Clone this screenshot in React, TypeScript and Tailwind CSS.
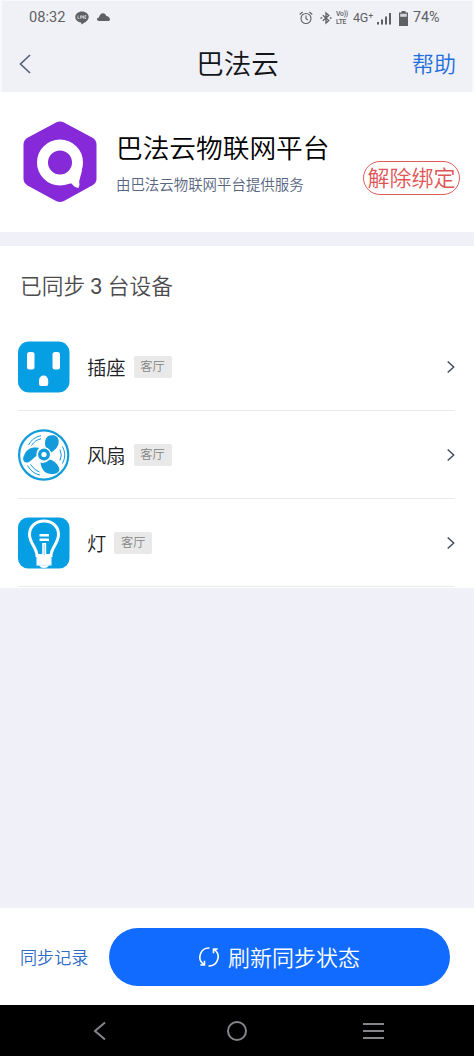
import type { ReactNode } from "react";

function StatusBar() {
  return (
    <div className="flex h-[34px] items-center pl-[27px] pr-[31px] font-['Roboto',sans-serif] text-[14.6px] font-normal text-[#5f6064]">
      <span className="w-[37px] whitespace-nowrap">08:32</span>
      <svg className="ml-[9px] h-[14px] w-[14px]" viewBox="0 0 14 14">
        <path d="M7 .5C3.300.5.3 2.900.3 6c0 2.700 2.200 4.900 5.500 5.400l.5.300v1.800c2.500-1.200 7.400-3.700 7.400-7.500C13.700 2.900 10.700.5 7 .5z" fill="#5f6064" />
        <path d="M2.900 4.500v3h1.500M5.500 4.500v3M6.800 7.500v-3l1.700 3v-3M11.300 4.500H9.900v3h1.400M9.900 6h1.300" fill="none" stroke="#e0e2e8" strokeWidth=".75" />
      </svg>
      <svg className="ml-[8px] mt-[-2px] h-[8px] w-[13px]" viewBox="0 0 13 8" fill="#5f6064">
        <path d="M2 8C.8 8 0 7.300 0 6.300c0-1 .8-1.700 1.900-1.800C2.500 2.200 4 .3 6 .3c1.600 0 2.700 1 3.300 2.700C11 3.200 13 4.600 13 6.500 13 7.400 12.200 8 11.300 8z" />
      </svg>
      <div className="flex-1" />
      <svg className="h-[14px] w-[14px]" viewBox="0 0 14 14" fill="none" stroke="#5f6064" strokeWidth="1.100">
        <circle cx="7" cy="7.500" r="5" />
        <path d="M.7 3.500 3.600 1M10.400 1l2.900 2.500M7 4.500v3.300l2 1.200" />
      </svg>
      <svg className="ml-[7px] h-[14px] w-[12px]" viewBox="0 0 12 14" fill="none" stroke="#5f6064" strokeWidth="1.300">
        <path d="m2.800 4.200 6 5.300L6 12V2l2.800 2.500-6 5.300" />
        <path d="M.5 7h1.700M9.800 7h1.700" strokeWidth="1.700" />
      </svg>
      <div className="ml-[4px] flex w-[13px] flex-col whitespace-nowrap text-[6.8px] font-medium leading-[8px] tracking-[-0.2px]">
        <span>Vo))</span>
        <span>LTE</span>
      </div>
      <span className="ml-[4px] w-[21px] whitespace-nowrap text-[12.5px] tracking-[-0.2px]">4G⁺</span>
      <svg className="ml-[3px] h-[13px] w-[14px]" viewBox="0 0 14 13" fill="#5f6064">
        <path d="M0 10h2v2.500H0zM4 7.500h2v5H4zM8 4.500h2v8H8zM12 1h2v11.500h-2z" />
      </svg>
      <svg className="ml-[8px] h-[15px] w-[9px]" viewBox="0 0 9 15">
        <path d="M2.500 0h4v1.500H9V15H0V1.500h2.500z" fill="#5f6064" />
        <path d="M1.200 2.800h6.600v3H1.200z" fill="#d4d6dc" />
      </svg>
      <span className="ml-[5px] w-[28px] whitespace-nowrap text-[14.3px]">74%</span>
    </div>
  );
}

function BrandLogo() {
  return (
    <svg className="ml-[23px] h-[82px] w-[74px] shrink-0" viewBox="0 0 74 82">
      <path d="M33.500 1.200q3.500-1.600 7 0l29 15.600q4 2.400 4 7v34q0 4-4 6.500l-29 16q-3.500 1.600-7 0L4.500 64.500q-4-2.500-4-6.700v-34q0-4.600 4-7z" fill="#8529d9" />
      <circle cx="37" cy="41.500" r="17.500" fill="none" stroke="#fff" strokeWidth="11" />
      <path d="M42 62.500h6.500q3 4.200 7 4.500 1.500-3 .7-7l3-11-10 3z" fill="#fff" />
    </svg>
  );
}

function SocketIcon() {
  return (
    <svg className="h-[52px] w-[52px]" viewBox="0 0 52 52">
      <rect x="0" y=".5" width="51.500" height="51" rx="11" fill="#079fe4" />
      <rect x="9" y="11" width="7.500" height="17.500" rx="2.500" fill="#fff" />
      <rect x="34.500" y="11" width="7.500" height="17.500" rx="2.500" fill="#fff" />
      <path d="M21 39.500a4.600 5 0 0 1 9.200 0V43q0 2-2 2h-5.200q-2 0-2-2z" fill="#fff" />
    </svg>
  );
}

function FanIcon() {
  return (
    <svg className="h-[52px] w-[52px]" viewBox="0 0 52 52">
      <circle cx="25.700" cy="26" r="24.600" fill="#fff" stroke="#139bdc" strokeWidth="2.200" />
      <g fill="#139bdc">
        <path d="M28 18.500C26 14 27 7.500 32 6.500c5-1.300 9 1.500 8.700 6.500-.2 5-4.200 8.500-7.700 10.500q-1.500-4-5-5z" />
        <path d="M18.500 27c-3.500 2-5.500 6-9.500 6.500-4 .5-4.800-4-2.700-7.500C8.500 20 14 17.500 21 19q-3 3.500-2.500 8z" />
        <path d="M22.500 33.500q5 1.500 9.200-3c3.800 1 7.300 3.800 9.300 8 1 3-.5 5.300-3.500 6C30 46.500 23.500 43 22.500 33.500z" />
      </g>
      <circle cx="26" cy="25.500" r="7.200" fill="#fff" />
      <circle cx="26" cy="25.500" r="4.300" fill="none" stroke="#139bdc" strokeWidth="3.400" />
      <g fill="none" stroke="#139bdc" strokeWidth="1">
        <path d="M10.500 16Q14.500 8.500 23 6.500M13.500 16.500Q17 11 23 9.800" />
        <path d="M44.500 17.500q4.500 8.500 0 17M42 20.500q2.500 5.500 0 11" />
        <path d="M9.500 36.500q4.500 8 12.500 9.500M12.500 35.500q4 6 9 7.500" />
      </g>
    </svg>
  );
}

function BulbIcon() {
  return (
    <svg className="h-[52px] w-[52px]" viewBox="0 0 52 52">
      <rect x="0" y=".5" width="51.500" height="51" rx="10" fill="#079fe4" />
      <path d="M19 38.500c-.3-8-7.500-12.500-7.500-21C11.500 9 18 4 26 4s14.500 5 14.500 13.500c0 8.500-7.200 13-7.500 21z" fill="none" stroke="#fff" strokeWidth="3" />
      <path d="M21.500 18.200h9.500M21.500 22.800h9.500" stroke="#fff" strokeWidth="2.600" />
      <path d="M26.200 38V26" stroke="#fff" strokeWidth="4" />
      <path d="M26.200 38V27.500" stroke="#6cc8ef" strokeWidth=".8" />
      <path d="M18.500 40h15v8.500H31Q29.500 51 26 51t-5-2.500h-2.500z" fill="#fff" />
      <path d="M18 48q8 1 16-.5" fill="none" stroke="#9edaf4" strokeWidth=".5" />
    </svg>
  );
}

function DeviceRow({ icon, name, room }: { icon: ReactNode; name: string; room: string }) {
  return (
    <div className="ml-[18px] mr-[19px] flex h-[88px] items-center border-b border-[#eaeaec]">
      {icon}
      <span className="ml-[17px] pt-[4px] text-[19.3px] leading-none text-[#202124]">{name}</span>
      <span className="ml-[8px] flex h-[22px] w-[38px] items-center justify-center rounded-[2px] bg-[#e9e9e9] pt-[2px] text-[12.3px] text-[#858585]">
        {room}
      </span>
      <svg className="ml-auto h-[14px] w-[8px]" viewBox="0 0 8 14" fill="none" stroke="#454e61" strokeWidth="1.500">
        <path d="m.7 1.500 6 5.500-6 5.500" />
      </svg>
    </div>
  );
}

export default function App() {
  return (
    <div className="flex h-[1056px] w-[474px] flex-col overflow-hidden bg-[#f0f1f8] font-['Roboto','Noto_Sans_CJK_SC',sans-serif] font-[350]">
      <header className="h-[92px] shrink-0 border-x-2 border-t border-[#f8f9fc] bg-[#eff1f7]">
        <StatusBar />
        <div className="flex h-[57px] items-center justify-between pl-[17px] pr-[16px]">
          <svg className="h-[20px] w-[12px]" viewBox="0 0 12 20" fill="none" stroke="#535d7a" strokeWidth="1.600">
            <path d="M11 1 1.500 10 11 19" />
          </svg>
          <h1 className="ml-[32px] pt-[2px] text-[27.5px] leading-none text-[#141519]">巴法云</h1>
          <span className="pt-[2px] text-[22px] leading-none text-[#226edc]">帮助</span>
        </div>
      </header>

      <section className="flex h-[140px] shrink-0 items-center bg-white">
        <BrandLogo />
        <div className="ml-[19px] mt-[2px] flex flex-col whitespace-nowrap">
          <h2 className="text-[26.7px] leading-[38px] text-black">巴法云物联网平台</h2>
          <p className="mt-[7px] text-[14.45px] leading-[22px] text-[#58657f]">由巴法云物联网平台提供服务</p>
        </div>
        <button className="ml-auto mr-[14px] mt-[31px] flex h-[34px] w-[97px] shrink-0 items-center justify-center whitespace-nowrap rounded-full border-[1.500px] border-[#df5c5c] pt-[2px] text-[22px] leading-none text-[#df5555]">
          解除绑定
        </button>
      </section>

      <section className="mt-[14px] h-[342px] shrink-0 bg-white">
        <h3 className="flex h-[77px] items-center pl-[20px] pt-[5px] text-[21.7px] text-[#4b4b4d]">
          <span className="whitespace-pre">已同步 <span className="font-normal">3</span> 台设备</span>
        </h3>
        <DeviceRow icon={<SocketIcon />} name="插座" room="客厅" />
        <DeviceRow icon={<FanIcon />} name="风扇" room="客厅" />
        <DeviceRow icon={<BulbIcon />} name="灯" room="客厅" />
      </section>

      <div className="flex-1" />

      <footer className="flex h-[97px] shrink-0 items-center bg-white pl-[20px] pr-[24px]">
        <span className="w-[89px] whitespace-nowrap pt-[4px] text-[17.1px] text-[#2f6bc7]">同步记录</span>
        <button className="flex h-[58px] flex-1 items-center justify-center rounded-full bg-[#126bff] text-white">
          <svg className="mr-[9px] h-[20px] w-[20px]" viewBox="0 0 20 20" fill="none" stroke="#fff" strokeWidth="1.600">
            <path d="M10.500 1A9 9 0 0 0 4.700 17.300M1.300 18h4.200v-4.300" />
            <path d="M9.500 19A9 9 0 0 0 15.300 2.700M18.700 2h-4.200v4.300" />
          </svg>
          <span className="pt-[4px] text-[22px] leading-none">刷新同步状态</span>
        </button>
      </footer>

      <nav className="flex h-[51px] shrink-0 items-center bg-black pl-[93px]">
        <svg className="h-[20px] w-[13px]" viewBox="0 0 13 20" fill="none" stroke="#85858a" strokeWidth="2">
          <path d="M12 1.500 2 10l10 8.500" />
        </svg>
        <div className="ml-[121px] h-[20px] w-[20px] rounded-full border-2 border-[#85858a]" />
        <div className="ml-[116px] flex w-[21px] flex-col gap-[5px]">
          <i className="h-[2px] bg-[#85858a]" />
          <i className="h-[2px] bg-[#85858a]" />
          <i className="h-[2px] bg-[#85858a]" />
        </div>
      </nav>
    </div>
  );
}
